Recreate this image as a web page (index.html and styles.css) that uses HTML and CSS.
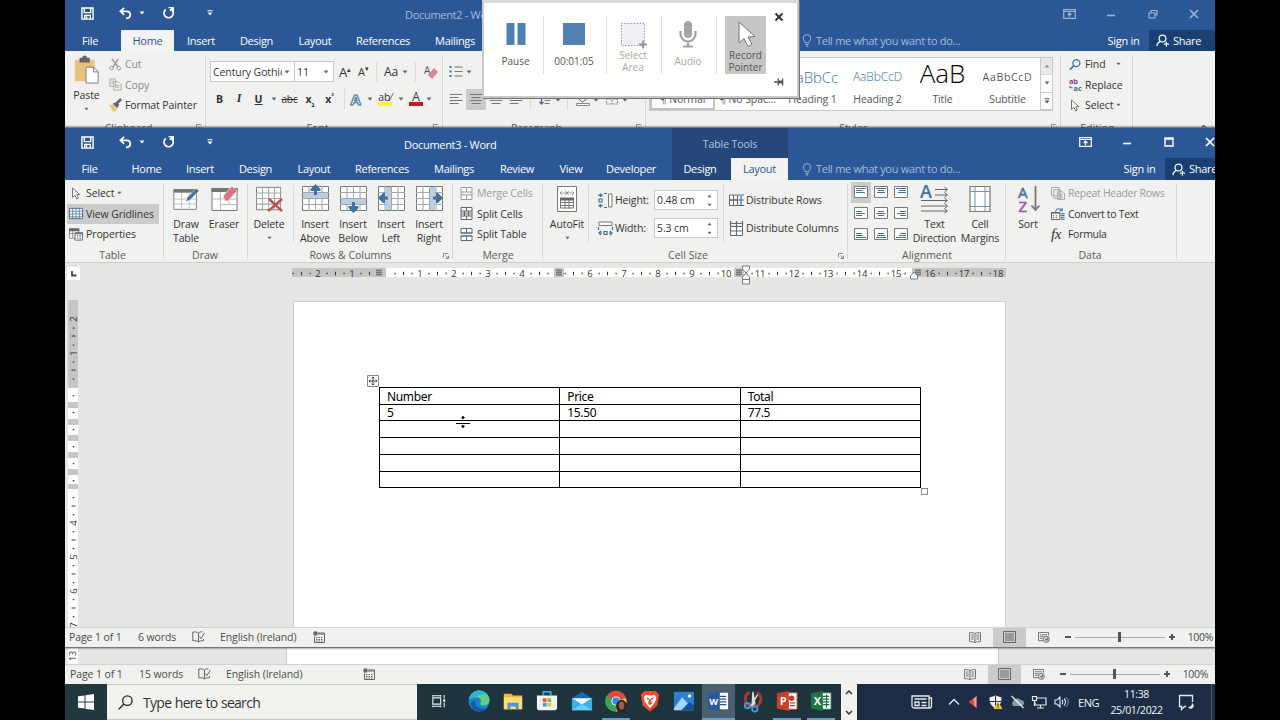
FILE: index.html
```html
<!DOCTYPE html>
<html lang="en">
  <head>
    <meta charset="UTF-8" />
    <title>Document3 - Word</title>
    <link rel="stylesheet" href="styles.css">
  </head>
  <body>
    <!-- shared icons -->
    <svg class="sprite" xmlns="http://www.w3.org/2000/svg">
      <symbol id="save" viewBox="0 0 14 14"><path d="M1 1h12v12H1zM3.500 1v5h7V1M4 13V9h6v4M6 10v3" fill="none" stroke="currentColor" stroke-width="1.500" /></symbol>
      <symbol id="undo" viewBox="0 0 14 14"><path d="M5.500 1L1.500 4.700l4 3.800M2 4.700h6.500c5 0 5 7.500-1 7.500" fill="none" stroke="currentColor" stroke-width="1.900" /></symbol>
      <symbol id="redo" viewBox="0 0 14 14"><path d="M4 2.700A5 5 0 1 0 10 2.500M7 0.500h5v5M11.500 1L8.500 4" fill="none" stroke="currentColor" stroke-width="1.800" /></symbol>
      <symbol id="caret" viewBox="0 0 6 4"><path d="M0.500 0.500h5L3 3.500z" fill="currentColor" /></symbol>
      <symbol id="morecaret" viewBox="0 0 6 6"><path d="M0.500 0.200h5v1h-5zM0.500 2.500h5L3 5.500z" fill="currentColor" /></symbol>
      <symbol id="ribbonopt" viewBox="0 0 13 10"><path d="M0.700 0.700h11.600v8.600H0.700zM1 2.500h11M6.500 8V4M4.500 6l2-2 2 2" fill="none" stroke="currentColor" stroke-width="1.200" /></symbol>
      <symbol id="min" viewBox="0 0 10 10"><path d="M1 6.500h8" stroke="currentColor" stroke-width="1.600" /></symbol>
      <symbol id="max" viewBox="0 0 10 10"><path d="M1 1h8v8H1zM1 2h8" fill="none" stroke="currentColor" stroke-width="1.400" /></symbol>
      <symbol id="restore" viewBox="0 0 10 10"><path d="M1 4h6v5H1zM3 4V1.500h6V6H7" fill="none" stroke="currentColor" stroke-width="1.200" /></symbol>
      <symbol id="close" viewBox="0 0 10 10"><path d="M1 1l8 8M9 1L1 9" stroke="currentColor" stroke-width="1.700" /></symbol>
      <symbol id="bulb" viewBox="0 0 10 14"><path d="M3 9.500C3 7.500 1 7 1 4.600a4 4 0 0 1 8 0C9 7 7 7.500 7 9.500zM3.200 11.500h3.600M4 13h2" fill="none" stroke="currentColor" /></symbol>
      <symbol id="person" viewBox="0 0 14 14"><circle cx="7" cy="4.800" r="3.700" fill="none" stroke="currentColor" stroke-width="1.300" /><path d="M5 8C2 9 1.200 11 1 13M8.500 11H14M11.200 8.300v5.500" fill="none" stroke="currentColor" stroke-width="1.300" /></symbol>
      <symbol id="pointer" viewBox="0 0 10 13"><path d="M1.500 1v9.500L4 8.300 5.600 12l1.700-.8L5.800 7.600h3z" fill="#fff" stroke="#666" stroke-width="0.900" /></symbol>
      <symbol id="launcher" viewBox="0 0 7 7"><path d="M0.500 5V0.500H6M3 3l3 3M6.500 3v3.500H3" fill="none" stroke="#666" stroke-width="0.900" /></symbol>
      <symbol id="grid" viewBox="0 0 27 27"><path d="M0.500 1.500h26v24h-26z" fill="#fff" stroke="#777" /><path d="M0 7.500h27M0 13.500h27M0 19.500h27M7 1v25M13.500 1v25M20 1v25" stroke="#a2a6aa" stroke-width="1.100" /></symbol>
      <symbol id="cells" viewBox="0 0 12 13"><path d="M0.500 0.500h11v4.500H0.500zM0.500 8h11v4.500H0.500zM6 0.500V5M6 8v4.500M0.500 5v3M11.500 5v3" fill="#fff" stroke="currentColor" /></symbol>
      <symbol id="book" viewBox="0 0 13 12"><path d="M6.500 2C5 0.700 3 0.800 0.800 1v8.800c2.200-.2 4.200-.2 5.700 1.200zM6.500 11c1.200-1.200 3-1.300 5-1.200V8M6.500 2c1-1 2-1.200 4-1.200M7.500 5.500l1.500 2L12.500 2" fill="none" stroke="#666" /></symbol>
      <symbol id="macro" viewBox="0 0 12 12"><path d="M5 2h6.500v9.500h-10V5.500M5 3h6" fill="none" stroke="#666" /><path d="M3 6.500h7M3 8.500h7M3 10h7" stroke="#666" stroke-dasharray="1.500 1" /><circle cx="2.500" cy="2.500" r="2.300" fill="#666" /></symbol>
      <symbol id="readview" viewBox="0 0 12 11"><path d="M6 1.500C4.500 0.500 2.500 0.500 0.500 0.700v9c2 0 4 0 5.500 1 1.500-1 3.500-1 5.500-1v-9C9.500 0.500 7.500 0.500 6 1.500v9M1.800 3h3M1.800 5h3M1.800 7h3M7.300 3h3M7.300 5h3M7.300 7h3" fill="none" stroke="#6a6a6a" stroke-width="0.900" /></symbol>
      <symbol id="printview" viewBox="0 0 13 12"><path d="M0.500 0.500h12v11H0.500zM2 3h9M2 5h9M2 7h9M2 9h9" fill="none" stroke="#666" /></symbol>
      <symbol id="webview" viewBox="0 0 13 12"><path d="M6 9.500H0.500v-9h11V4M2 3h8M2 5h4M2 7h3" fill="none" stroke="#6a6a6a" /><circle cx="9" cy="8" r="3.300" fill="#ddd" stroke="#666" /><path d="M7 7l2 1 1-2 1.500 1-2 3z" fill="#666" /></symbol>
      <symbol id="lines-left" viewBox="0 0 13 13"><path d="M0 1.500h13M0 4.500h9M0 7.500h13M0 10.500h9" stroke="#777" /></symbol>
      <symbol id="lines-center" viewBox="0 0 13 13"><path d="M0 1.500h13M2 4.500h9M0 7.500h13M2 10.500h9" stroke="#777" /></symbol>
      <symbol id="page-tl" viewBox="0 0 14 12"><path d="M0.500 0.500h13v11H0.500z" fill="#fff" stroke="#777" /></symbol>
      <symbol id="hash" viewBox="0 0 10 9"><path d="M0 0h10v9H0z" fill="#c4c4c2" /><path d="M3 1v7M5 1v7M7 1v7M2 2.500h6M2 4.500h6M2 6.500h6" stroke="#666" stroke-width="0.700" /></symbol>
    </svg>

    <div class="screen">
      <!-- window behind: Document2 -->
      <div class="window back">
        <div class="titlebar">
          <div class="qat">
            <svg><use href="#save" /></svg><svg><use href="#undo" /></svg><svg class="tiny"><use href="#caret" /></svg><svg><use href="#redo" /></svg><svg class="more"><use href="#morecaret" /></svg>
          </div>
          <div class="title">Document2 - Word</div>
          <div class="controls">
            <svg class="opt"><use href="#ribbonopt" /></svg><svg><use href="#min" /></svg><svg><use href="#restore" /></svg><svg><use href="#close" /></svg>
          </div>
        </div>
        <div class="tabs">
          <span>File</span><span class="active">Home</span><span>Insert</span><span>Design</span><span>Layout</span><span>References</span><span>Mailings</span><span>Review</span><span>View</span><span>Developer</span><span></span><span></span>
          <div class="tell"><svg><use href="#bulb" /></svg>Tell me what you want to do...</div>
          <div class="signin">Sign in</div>
          <div class="share"><svg><use href="#person" /></svg>Share</div>
        </div>
        <div class="ribbon">
          <div class="group clipboard">
            <div class="body">
              <div class="big">
                <svg viewBox="0 0 27 30"><path d="M1 4h21v23H1z" fill="#e8c37c" /><path d="M6 2h3a2.500 2.500 0 0 1 5 0h3v5H6z" fill="#666" /><path d="M13 12h8l5 5v12H13z" fill="#fff" stroke="#777" /><path d="M21 12v5h5" fill="none" stroke="#777" /></svg>
                <span>Paste</span><svg class="caret"><use href="#caret" /></svg>
              </div>
              <div class="rows">
                <div class="item off"><svg viewBox="0 0 14 14"><path d="M3 1l7 9M10 1L4 10" stroke="#999" stroke-width="1.500" /><circle cx="2.800" cy="11" r="2" fill="none" stroke="#999" /><circle cx="10.500" cy="11" r="2" fill="none" stroke="#999" /></svg>Cut</div>
                <div class="item off"><svg viewBox="0 0 14 14"><path d="M1 1h6v8H1zM5 4h5l3 3v6H5zM2.500 3.500h3M2.500 5.500h2M7 8h4M7 10h4" fill="#f1f1ef" stroke="#aaa" /></svg>Copy</div>
                <div class="item"><svg viewBox="0 0 14 14"><path d="M0 7l4-1 5 5-4 3z" fill="#e8c37c" /><path d="M4 5l4-2 3 3-2 4z" fill="#666" /><path d="M9 4l4-4" stroke="#666" stroke-width="3" /></svg>Format Painter</div>
              </div>
            </div>
            <div class="label">Clipboard<svg><use href="#launcher" /></svg></div>
          </div>
          <div class="group fontgroup">
            <div class="body">
              <div class="fontrow">
                <div class="combo face"><span>Century Gothic</span><svg class="tiny"><use href="#caret" /></svg></div>
                <div class="combo size">11<svg class="tiny"><use href="#caret" /></svg></div>
                <b class="grow">A<sup>▴</sup></b><b class="shrink">A<sup>▾</sup></b><i class="sep"></i>
                <span class="aa">Aa</span><svg class="tiny"><use href="#caret" /></svg><i class="sep"></i>
                <svg class="clear" viewBox="0 0 14 14"><text x="0" y="9" font-size="10" fill="#555">A</text><path d="M4 10l6-7 4 4-6 7z" fill="#e0829a" /></svg>
              </div>
              <div class="fontrow second">
                <b>B</b><b class="it">I</b><b class="un">U</b><svg class="tiny"><use href="#caret" /></svg><b class="st">abc</b><b>x<sub>₂</sub></b><b>x<sup>²</sup></b><i class="sep"></i>
                <b class="fx">A</b><svg class="tiny"><use href="#caret" /></svg><b class="hl">ab⁄</b><svg class="tiny"><use href="#caret" /></svg><b class="fc">A</b><svg class="tiny"><use href="#caret" /></svg>
              </div>
            </div>
            <div class="label">Font<svg><use href="#launcher" /></svg></div>
          </div>
          <div class="group para">
            <div class="body">
              <div class="prow"><svg class="ic" viewBox="0 0 13 13"><path d="M5 2h8M5 6.500h8M5 11h8" stroke="#777" /><path d="M0 1h2v2H0zM0 5.500h2v2H0zM0 10h2v2H0z" fill="#41719c" /></svg><svg class="tiny"><use href="#caret" /></svg></div>
              <div class="prow low">
                <svg class="ic"><use href="#lines-left" /></svg><svg class="ic on"><use href="#lines-center" /></svg><svg class="ic"><use href="#lines-center" /></svg><svg class="ic"><use href="#lines-left" /></svg><i class="sep"></i>
                <svg class="ic" viewBox="0 0 13 13"><path d="M3 1v10M1 9l2 2 2-2" stroke="#41719c" fill="none" stroke-width="1.400" /><path d="M6 4h7M6 7.500h6M6 10.500h5" stroke="#777" /></svg><svg class="tiny"><use href="#caret" /></svg><i class="sep wide"></i>
                <svg class="ic" viewBox="0 0 13 13"><path d="M2 6l4-4 4 4-4 3z" fill="none" stroke="#666" /><path d="M0 10.500h13v2H0z" fill="#fff" stroke="#888" /></svg><svg class="tiny"><use href="#caret" /></svg><svg class="ic border" viewBox="0 0 13 13"><path d="M1 1h11v10H1zM6.500 1v10M1 6h11" fill="none" stroke="#888" stroke-dasharray="2 1" /></svg><svg class="tiny"><use href="#caret" /></svg>
              </div>
            </div>
            <div class="label">Paragraph<svg><use href="#launcher" /></svg></div>
          </div>
          <div class="group styles">
            <div class="body">
              <div class="gallery">
                <div class="style chosen"><span>AaBbCcDc</span>¶ Normal</div>
                <div class="style"><span>AaBbCcDc</span>¶ No Spac...</div>
                <div class="style h1"><span>AaBbCc</span>Heading 1</div>
                <div class="style h2"><span>AaBbCcD</span>Heading 2</div>
                <div class="style ttl"><span>AaB</span>Title</div>
                <div class="style sub"><span>AaBbCcD</span>Subtitle</div>
                <div class="scroll"><i class="dim"><svg class="tiny up"><use href="#caret" /></svg></i><i><svg class="tiny"><use href="#caret" /></svg></i><i><svg class="more"><use href="#morecaret" /></svg></i></div>
              </div>
            </div>
            <div class="label">Styles<svg><use href="#launcher" /></svg></div>
          </div>
          <div class="group editing">
            <div class="body rows">
              <div class="item"><svg viewBox="0 0 13 13"><circle cx="8" cy="5" r="3.800" fill="none" stroke="#41719c" stroke-width="1.400" /><path d="M5 8l-4 4" stroke="#41719c" stroke-width="2" /></svg>Find<svg class="tiny far"><use href="#caret" /></svg></div>
              <div class="item"><svg viewBox="0 0 13 13"><text x="0" y="6" font-size="8" font-weight="bold" fill="#7a4a8a">ab</text><text x="5" y="13.500" font-size="8" font-weight="bold" fill="#41719c">ac</text><path d="M1 8v2h3" fill="none" stroke="#555" /></svg>Replace</div>
              <div class="item"><svg><use href="#pointer" /></svg>Select<svg class="tiny"><use href="#caret" /></svg></div>
            </div>
            <div class="label">Editing</div>
          </div>
          <div class="collapse">⌃</div>
        </div>
        <div class="backpage"><span class="vnum">13</span><div class="strip"></div></div>
        <div class="status">
          <span class="pages">Page 1 of 1</span><span class="words">15 words</span><svg class="proof"><use href="#book" /></svg><span class="lang">English (Ireland)</span><svg class="macro"><use href="#macro" /></svg>
          <div class="views">
            <svg><use href="#readview" /></svg><i><svg><use href="#printview" /></svg></i><svg><use href="#webview" /></svg>
            <b class="minus"></b><div class="slider"><b></b></div><b class="plus"></b><span>100%</span>
          </div>
        </div>
      </div>

      <!-- front window: Document3 -->
      <div class="window front">
        <div class="titlebar">
          <div class="qat">
            <svg><use href="#save" /></svg><svg><use href="#undo" /></svg><svg class="tiny"><use href="#caret" /></svg><svg><use href="#redo" /></svg><svg class="more"><use href="#morecaret" /></svg>
          </div>
          <div class="title">Document3 - Word</div>
          <div class="context">Table Tools</div>
          <div class="controls">
            <svg class="opt"><use href="#ribbonopt" /></svg><svg><use href="#min" /></svg><svg><use href="#max" /></svg><svg><use href="#close" /></svg>
          </div>
        </div>
        <div class="tabs">
          <span>File</span><span>Home</span><span>Insert</span><span>Design</span><span>Layout</span><span>References</span><span>Mailings</span><span>Review</span><span>View</span><span>Developer</span><span class="dark">Design</span><span class="active">Layout</span>
          <div class="tell"><svg><use href="#bulb" /></svg>Tell me what you want to do...</div>
          <div class="signin">Sign in</div>
          <div class="share"><svg><use href="#person" /></svg>Share</div>
        </div>
        <div class="ribbon">
          <div class="group table">
            <div class="body rows">
              <div class="item"><svg><use href="#pointer" /></svg>Select<svg class="tiny"><use href="#caret" /></svg></div>
              <div class="item pressed"><svg viewBox="0 0 15 12"><path d="M0.500 0.500h14v11H0.500z" fill="#fff" stroke="#41719c" /><path d="M0 3.500h15M0 6.500h15M0 9.500h15M4 0v12M7.500 0v12M11 0v12" stroke="#41719c" stroke-width="0.800" /></svg>View Gridlines</div>
              <div class="item"><svg viewBox="0 0 15 13"><path d="M0.500 0.500h10v10h-10zM0 5.500h9M4 1v9" fill="#fff" stroke="#888" /><path d="M0 0h11v3H0z" fill="#666" /><path d="M6.500 4.500h8v8h-8z" fill="#fff" stroke="#666" /><path d="M7 5.500h8M8.500 8h1.500M11 8h2M8.500 10.500h1.500M11 10.500h2" stroke="#41719c" stroke-width="1.300" /></svg>Properties</div>
            </div>
            <div class="label">Table</div>
          </div>
          <div class="group draw">
            <div class="body">
              <div class="big"><svg viewBox="0 0 30 28"><path d="M1 3.500h25v22H1z" fill="#fff" stroke="#777" /><path d="M1 14h25M1 19.500h25M9.500 7v18M18 7v18" stroke="#b5b9be" /><path d="M0.500 3h26v4h-26z" fill="#777" /><path d="M14 17l2-5L26 2l3 3-10 10z" fill="#41719c" stroke="#fff" stroke-width="0.600" /></svg><span>Draw<br>Table</span></div>
              <div class="big"><svg viewBox="0 0 27 28"><path d="M1 3.500h25v22H1z" fill="#fff" stroke="#777" /><path d="M1 14h25M9.500 7v18M9 19.500h17M18 7v13" stroke="#b5b9be" /><path d="M0.500 3h26v4h-26z" fill="#777" /><path d="M12 11l9-10 5 5-9 10h-3z" fill="#d9748c" stroke="#fff" stroke-width="0.600" /></svg><span>Eraser</span></div>
            </div>
            <div class="label">Draw</div>
          </div>
          <div class="group rc">
            <div class="body">
              <div class="big"><svg viewBox="0 0 29 28"><use href="#grid" x="0" y="0" width="27" height="27" /><path d="M14 14l14 13M28 14L13 27" stroke="#c0504d" stroke-width="2.600" /></svg><span>Delete</span><svg class="caret"><use href="#caret" /></svg></div>
              <i class="sep"></i>
              <div class="big"><svg viewBox="0 0 27 28"><use href="#grid" width="27" height="27" /><path d="M1 8h25v5H1z" fill="#b8cfe4" /><path d="M13.500 -1l5 5v2h-3.500v4h-3V6H8.500V4z" fill="#41719c" /></svg><span>Insert<br>Above</span></div>
              <div class="big"><svg viewBox="0 0 27 28"><use href="#grid" width="27" height="27" /><path d="M1 14h25v5H1z" fill="#b8cfe4" /><path d="M13.500 28l5-5v-2h-3.500v-4h-3v4H8.500v2z" fill="#41719c" /></svg><span>Insert<br>Below</span></div>
              <div class="big"><svg viewBox="0 0 27 28"><use href="#grid" width="27" height="27" /><path d="M8 2h5v23H8z" fill="#b8cfe4" /><path d="M0 13l5-5h2v3.500h3v3H7V18H5z" fill="#41719c" /></svg><span>Insert<br>Left</span></div>
              <div class="big"><svg viewBox="0 0 27 28"><use href="#grid" width="27" height="27" /><path d="M14 2h5v23h-5z" fill="#b8cfe4" /><path d="M27 13l-5-5h-2v3.500h-3v3h3V18h2z" fill="#41719c" /></svg><span>Insert<br>Right</span></div>
            </div>
            <div class="label">Rows &amp; Columns<svg><use href="#launcher" /></svg></div>
          </div>
          <div class="group merge">
            <div class="body rows">
              <div class="item off"><svg><use href="#cells" /></svg>Merge Cells</div>
              <div class="item"><svg viewBox="0 0 12 13"><path d="M0.500 0.500h11v12H0.500zM0.500 4h11M0.500 9h11M4 4v5M8 4v5M6 0v4M6 9v4" fill="#fff" stroke="#666" /><path d="M1 5h10v3H1z" fill="#41719c" opacity="0.500" /></svg>Split Cells</div>
              <div class="item"><svg viewBox="0 0 12 13"><path d="M0.500 0.500h11v4.500H0.500zM0.500 8h11v4.500H0.500zM6 0.500V5M6 8v4.500" fill="#fff" stroke="#666" /><path d="M0 5h12M0 8h12" stroke="#41719c" /></svg>Split Table</div>
            </div>
            <div class="label">Merge</div>
          </div>
          <div class="group cellsize">
            <div class="body">
              <div class="big"><svg viewBox="0 0 20 27"><path d="M0.500 1h19v25H0.500z" fill="#fff" stroke="#777" /><path d="M3 7.500h14M5 5.500l-2 2 2 2M15 5.500l2 2-2 2M8 5l4 5M12 5l-4 5" fill="none" stroke="#888" stroke-width="0.800" /><path d="M3.500 13.500h13v9h-13zM3.500 17h13M3.500 20h13M8 14v9M12 14v9" fill="none" stroke="#777" /><path d="M3 12h14v3H3z" fill="#666" /></svg><span>AutoFit</span><svg class="caret"><use href="#caret" /></svg></div>
              <i class="sep"></i>
              <div class="dims">
                <div class="dim-row"><svg viewBox="0 0 15 15"><path d="M2.500 1v3M2.500 11v3M0.500 3l2-2 2 2M0.500 12l2 2 2-2M1 6h3v3H1zM6 0.500h3M6 14.500h3" fill="none" stroke="#41719c" stroke-width="1.200" /><path d="M10.500 1h3.500v13h-3.500z" fill="#fff" stroke="#777" /></svg><span>Height:</span><div class="spin">0.48 cm<i><svg class="tiny up"><use href="#caret" /></svg><svg class="tiny"><use href="#caret" /></svg></i></div></div>
                <div class="dim-row"><svg viewBox="0 0 15 15"><path d="M1 1h13v3.500H1z" fill="#fff" stroke="#777" /><path d="M1 12h3M11 12h3M3 10l-2 2 2 2M12 10l2 2-2 2M6 10.500h3v3H6zM0.500 6v3M14.500 6v3" fill="none" stroke="#41719c" stroke-width="1.200" /></svg><span>Width:</span><div class="spin">5.3 cm<i><svg class="tiny up"><use href="#caret" /></svg><svg class="tiny"><use href="#caret" /></svg></i></div></div>
              </div>
              <i class="sep"></i>
              <div class="dims dist">
                <div class="dim-row"><svg viewBox="0 0 15 13"><path d="M0.500 1h8v5h-8zM0.500 6h8v5.500h-8zM4.500 1v10" fill="#fff" stroke="#666" /><path d="M9 1h6M9 6h6M9 11.500h6M12 2v9" stroke="#41719c" stroke-width="1.200" /></svg>Distribute Rows</div>
                <div class="dim-row"><svg viewBox="0 0 15 15"><path d="M1.500 5.500h12v9h-12zM1.500 10h12M7.500 5.500v9" fill="#fff" stroke="#666" /><path d="M1.500 0v5M7.500 0v5M13.500 0v5M1 2.500h13" stroke="#41719c" stroke-width="1.200" /></svg>Distribute Columns</div>
              </div>
            </div>
            <div class="label">Cell Size<svg><use href="#launcher" /></svg></div>
          </div>
          <div class="group align">
            <div class="body">
              <div class="nine">
                <i class="on"><svg viewBox="0 0 14 12"><use href="#page-tl" /><path d="M2 2.500h10M2 4.500h7M2 6.500h9" stroke="#41719c" /></svg></i>
                <i><svg viewBox="0 0 14 12"><use href="#page-tl" /><path d="M2 2.500h10M4 4.500h6M3 6.500h8" stroke="#41719c" /></svg></i>
                <i><svg viewBox="0 0 14 12"><use href="#page-tl" /><path d="M2 2.500h10M5 4.500h7M4 6.500h8" stroke="#41719c" /></svg></i>
                <i><svg viewBox="0 0 14 12"><use href="#page-tl" /><path d="M2 4.500h6M2 6.500h9M2 8.500h6" stroke="#41719c" /></svg></i>
                <i><svg viewBox="0 0 14 12"><use href="#page-tl" /><path d="M4 4.500h6M2.500 6.500h9M4 8.500h6" stroke="#41719c" /></svg></i>
                <i><svg viewBox="0 0 14 12"><use href="#page-tl" /><path d="M6 4.500h6M3 6.500h9M6 8.500h6" stroke="#41719c" /></svg></i>
                <i><svg viewBox="0 0 14 12"><use href="#page-tl" /><path d="M2 5.500h6M2 7.500h7M2 9.500h10" stroke="#41719c" /></svg></i>
                <i><svg viewBox="0 0 14 12"><use href="#page-tl" /><path d="M4 5.500h6M3 7.500h8M2 9.500h10" stroke="#41719c" /></svg></i>
                <i><svg viewBox="0 0 14 12"><use href="#page-tl" /><path d="M6 5.500h6M5 7.500h7M2 9.500h10" stroke="#41719c" /></svg></i>
              </div>
              <div class="big"><svg viewBox="0 0 29 28"><text x="0" y="13" font-size="18" font-weight="600" fill="#41719c">A</text><path d="M15 4.500h12M15 10h12M1 15.500h26M1 21h26M1 26h26" stroke="#666" stroke-width="1.200" /><path d="M24.500 2l3 2.500-3 2.500M24.500 7.500l3 2.500-3 2.500M24.500 13l3 2.500-3 2.500M24.500 18.500l3 2.500-3 2.500M24.500 23.500l3 2.500-3 2" fill="none" stroke="#666" /></svg><span>Text<br>Direction</span></div>
              <div class="big"><svg viewBox="0 0 22 28"><path d="M1 1.500h20v25H1z" fill="#fff" stroke="#777" stroke-width="1.200" /><path d="M6 2v24M16 2v24M1 6.500h20M1 21.500h20" stroke="#6f93b5" /></svg><span>Cell<br>Margins</span></div>
            </div>
            <div class="label">Alignment</div>
          </div>
          <div class="group data">
            <div class="body">
              <div class="big"><svg viewBox="0 0 23 28"><text x="1" y="12.500" font-size="15" fill="#41719c" stroke="#41719c" stroke-width="0.500">A</text><text x="1.500" y="27" font-size="15" fill="#9c4fa8" stroke="#9c4fa8" stroke-width="0.500">Z</text><path d="M18.500 1v24M14.500 20.500l4 4.500 4-4.500" fill="none" stroke="#777" stroke-width="1.800" /></svg><span>Sort</span></div>
              <div class="rows">
                <div class="item off"><svg viewBox="0 0 15 14"><path d="M0.500 0.500h8v9h-8zM3 3h7v9H3zM7 5h5l2.500 2v6.500H7zM8.500 8h4M8.500 10h4M8.500 12h4" fill="#f1f1ef" stroke="#a5a5a5" /></svg>Repeat Header Rows</div>
                <div class="item"><svg viewBox="0 0 15 14"><path d="M0.500 6h9v7.500h-9z" fill="#fff" stroke="#555" /><path d="M0 6.500h10M2 9.500h1.500M5 9.500h1.500M2 11.500h1.500M5 11.500h1.500" stroke="#555" /><path d="M5 5c0-3 3-4 6-2M12 1v3H9M10.500 7h4M10.500 9h4M10.500 11h4M10.500 13h4" fill="none" stroke="#41719c" stroke-width="1.200" /></svg>Convert to Text</div>
                <div class="item"><em>fx</em>Formula</div>
              </div>
            </div>
            <div class="label">Data</div>
          </div>
        </div>

        <div class="workspace">
          <div class="hrule">
            <div class="tabstop"><svg viewBox="0 0 13 13"><path d="M5 4v4.500h4.500" fill="none" stroke="#444" stroke-width="1.800" /></svg></div>
            <svg class="scale" viewBox="292 264 716 24">
              <path d="M292 268h94v9h-94zM912 268h94v9h-94z" fill="#c6c6c4" />
              <path d="M386 268h526v9H386z" fill="#fffffd" />
              <path d="M301 273.500h705" stroke="#333" stroke-width="3.500" stroke-dasharray="1 33" />
              <path d="M309.500 273.500h690" stroke="#333" stroke-width="1.500" stroke-dasharray="1.200 32.800" />
              <path d="M292.500 273.500h712" stroke="#333" stroke-width="1.500" stroke-dasharray="1.200 32.800" />
              <g class="nums">
                <text x="318" y="277">2</text><text x="352" y="277">1</text><text x="420" y="277">1</text><text x="454" y="277">2</text><text x="488" y="277">3</text><text x="522" y="277">4</text><text x="590" y="277">6</text><text x="624" y="277">7</text><text x="658" y="277">8</text><text x="692" y="277">9</text><text x="726" y="277">10</text><text x="760" y="277">11</text><text x="794" y="277">12</text><text x="828" y="277">13</text><text x="862" y="277">14</text><text x="896" y="277">15</text><text x="930" y="277">16</text><text x="964" y="277">17</text><text x="998" y="277">18</text>
              </g>
              <use href="#hash" x="373" y="268" width="12" height="9" /><use href="#hash" x="553" y="268" width="12" height="9" /><use href="#hash" x="733" y="268" width="12" height="9" /><use href="#hash" x="913" y="268" width="10" height="9" />
              <path d="M742.500 266h7v3l-3.500 4 3.500 4v7h-7v-7l3.500-4-3.500-4zM742.500 279.500h7" fill="#fff" stroke="#777" />
              <path d="M910.500 279v-3l3.500-4 3.500 4v3z" fill="#fff" stroke="#777" />
            </svg>
          </div>
          <div class="canvas">
            <svg class="vscale" viewBox="67 300 12 327">
              <path d="M68 300h10v327H68z" fill="#fffffd" />
              <path d="M68 300h10v88H68zM68 402h10v6H68zM68 419h10v6H68zM68 435h10v6H68zM68 452h10v6H68zM68 469h10v6H68zM68 484h10v5H68z" fill="#c6c6c4" />
              <path d="M73.500 327.500v60" stroke="#333" stroke-width="1.500" stroke-dasharray="1.200 15.800" />
              <path d="M73.500 335.500v45" stroke="#333" stroke-width="4" stroke-dasharray="1 33" />
              <path d="M73.500 395v95" stroke="#333" stroke-width="1.500" stroke-dasharray="1.200 15.800" />
              <path d="M73.500 497v130" stroke="#333" stroke-width="1.500" stroke-dasharray="1.200 15.800" />
              <path d="M73.500 505.500v115" stroke="#333" stroke-width="4" stroke-dasharray="1 33" />
              <g class="nums">
                <text transform="translate(77 319) rotate(-90)">2</text><text transform="translate(77 353) rotate(-90)">1</text><text transform="translate(77 523) rotate(-90)">4</text><text transform="translate(77 557) rotate(-90)">5</text><text transform="translate(77 591) rotate(-90)">6</text><text transform="translate(77 625) rotate(-90)">7</text>
              </g>
            </svg>
            <div class="page">
              <table>
                <tr><td>Number</td><td>Price</td><td>Total</td></tr>
                <tr class="short"><td>5</td><td>15.50</td><td>77.5</td></tr>
                <tr><td></td><td></td><td></td></tr>
                <tr><td></td><td></td><td></td></tr>
                <tr><td></td><td></td><td></td></tr>
                <tr class="short"><td></td><td></td><td></td></tr>
              </table>
              <svg class="move" viewBox="0 0 12 12"><path d="M0.500 0.500h11v11H0.500z" fill="#fff" stroke="#888" /><path d="M6 2v8M2 6h8M4.700 3.300L6 2l1.300 1.300M4.700 8.700L6 10l1.300-1.300M3.300 4.700L2 6l1.300 1.300M8.700 4.700L10 6 8.700 7.300" fill="none" stroke="#333" stroke-width="0.900" /></svg>
              <i class="handle"></i>
              <svg class="resize" viewBox="0 0 14 14"><path d="M0 5h14v4H0z" fill="#fff" /><path d="M0 5.500h14M0 8.500h14M7 1v3M7 10v3" stroke="#000" /><path d="M5 3l2-2 2 2-2 1zM5 11l2 2 2-2-2-1z" /></svg>
            </div>
          </div>
        </div>
        <div class="status">
          <span class="pages">Page 1 of 1</span><span class="words">6 words</span><svg class="proof"><use href="#book" /></svg><span class="lang">English (Ireland)</span><svg class="macro"><use href="#macro" /></svg>
          <div class="views">
            <svg><use href="#readview" /></svg><i><svg><use href="#printview" /></svg></i><svg><use href="#webview" /></svg>
            <b class="minus"></b><div class="slider"><b></b></div><b class="plus"></b><span>100%</span>
          </div>
        </div>
      </div>

      <!-- screen recording bar -->
      <div class="recorder">
        <div class="rec"><svg viewBox="0 0 26 26"><path d="M3.500 2h8v22h-8zM14.500 2h8v22h-8z" fill="#4f81b5" /></svg>Pause</div>
        <div class="rec"><svg viewBox="0 0 26 26"><path d="M2 2h22v22H2z" fill="#4f81b5" /></svg>00:01:05</div>
        <div class="rec off two"><svg viewBox="0 0 26 26"><path d="M1.500 2.500h23v22h-23z" fill="#f1eef5" stroke="#9a9a9a" stroke-dasharray="1.500 1.500" /><path d="M19 23.500h8M23 19.500v8" stroke="#999" stroke-width="2" /></svg>Select<br>Area</div>
        <div class="rec off"><svg viewBox="0 0 26 26"><rect x="9" y="0" width="8" height="17" rx="4" fill="#a3a3a3" /><path d="M5.500 10v3a7.500 7.500 0 0 0 15 0v-3M13 20v5M8 25.500h10" fill="none" stroke="#a3a3a3" stroke-width="2.200" /></svg>Audio</div>
        <div class="rec two pressed"><svg viewBox="0 0 26 26"><path d="M6 1v21l5-4.500 4 8 4-2-4-7.500 7-.5z" fill="#fff" stroke="#777" /></svg>Record<br>Pointer</div>
        <div class="side"><svg viewBox="0 0 10 10"><path d="M1.500 1.500l7 7M8.500 1.500l-7 7" stroke="#333" stroke-width="2" /></svg><svg viewBox="0 0 10 10"><path d="M0 5h4" stroke="#555" stroke-width="1.500" /><path d="M3.500 1.500h1.300v2H8v-2h1.300v7H8v-2H4.800v2H3.500z" fill="#555" /></svg></div>
      </div>

      <div class="taskbar">
        <div class="start"><svg viewBox="0 0 16 16"><path d="M0 2.300l6.500-.9v6.200H0zM7.500 1.200L16 0v7.600H7.500zM0 8.500h6.500v6.100L0 13.700zM7.500 8.500H16V16l-8.500-1.200z" fill="#fff" /></svg></div>
        <div class="search"><svg viewBox="0 0 16 16"><circle cx="10" cy="6" r="5" fill="none" stroke="#222" stroke-width="1.400" /><path d="M6.300 9.700L0.700 15.300" stroke="#222" stroke-width="1.500" /></svg>Type here to search</div>
        <div class="apps">
          <i class="taskview"><svg viewBox="0 0 16 16"><path d="M1.500 4.500h9v7h-9zM1.500 3V1M10.500 3V1M1.500 13v2M10.500 13v2M1.500 2h9M1.500 14h9M14.500 1v4M14.500 10v5" fill="none" stroke="#e8ecee" stroke-width="1.300" /><path d="M13.300 6h2.500v3h-2.500z" fill="#e8ecee" /></svg></i>
          <i><svg viewBox="0 0 24 24"><circle cx="12" cy="12" r="11.500" fill="#1d7fd0" /><path d="M1 10C3 3 8 .5 12 .5c7 0 11.500 5.500 11.500 10.500 0 4-3 6-6.500 6-4 0-4-2-3-4 1-3-2-6-6-5-3 0-5 1-7 2z" fill="#5fd08a" /><path d="M1 10C3 3 8 .5 12 .5c4 0 7 2 8 4.500-8-2-10 3-19 5z" fill="#2db3dc" /><path d="M8 12c-1 6 4 10 13 7.500-5 5.500-16 4.500-18-3.500 0-3 2-5 5-4z" fill="#1b57a5" /></svg></i>
          <i><svg viewBox="0 0 24 24"><path d="M2 4h8l2 2h10v15H2z" fill="#f0b93a" /><path d="M2 8h20v13H2z" fill="#fcdc7a" /><path d="M6 21v-7h12v7h-3v-3H9v3z" fill="#4698d8" /></svg></i>
          <i><svg viewBox="0 0 24 24"><path d="M8 6V2h8v4" fill="none" stroke="#3ba5dc" stroke-width="2" /><path d="M1 6h22v14a2 2 0 0 1-2 2H3a2 2 0 0 1-2-2z" fill="#f4f4f4" /><path d="M7.500 9h4v4h-4z" fill="#e8502d" /><path d="M12.500 9h4v4h-4z" fill="#7cb82f" /><path d="M7.500 14h4v4h-4z" fill="#2a9fe0" /><path d="M12.500 14h4v4h-4z" fill="#f6b81a" /></svg></i>
          <i><svg viewBox="0 0 24 24"><path d="M1 9l11-7 11 7v12H1z" fill="#1468b0" /><path d="M1 9h22L12 16z" fill="#f5fafd" /><path d="M1 9l11 7 11-7v13H1z" fill="#35b1ee" /><path d="M1 22l11-7 11 7z" fill="#69cdf6" /></svg></i>
          <i class="open"><svg viewBox="0 0 24 24"><circle cx="12" cy="12" r="11.500" fill="#dd4b3a" /><path d="M12 12L2 6A11.500 11.500 0 0 0 12 23.500z" fill="#3aa757" /><path d="M12 12l11-3A11.500 11.500 0 0 1 12 23.500z" fill="#f5c52c" /><circle cx="12" cy="12" r="5" fill="#fff" /><circle cx="12" cy="12" r="4" fill="#4285f4" /><ellipse cx="18" cy="18" rx="6" ry="7.500" fill="#30231f" /><ellipse cx="18" cy="17" rx="3" ry="4.500" fill="#94624b" /></svg></i>
          <i><svg viewBox="0 0 24 24"><path d="M6 1h12l4 4-2 12-8 6.500L4 17 2 5z" fill="#f04a28" /><path d="M7 5l5 1 5-1 2 4-2 5-5 6-5-6-2-5z" fill="#fff" /><path d="M7.500 8l3.500 1-1 2.500zM16.500 8L13 9l1 2.500zM11 10h2l1 5-2 1.500-2-1.500z" fill="#f04a28" /></svg></i>
          <i><svg viewBox="0 0 24 24"><path d="M1 2h22v20H1z" fill="#2b7fd3" /><path d="M1 20L10 8l13 14H1z" fill="#9fd7f7" /><path d="M9 22l9-9 5 4v5z" fill="#164f9c" /><circle cx="18" cy="6.500" r="2" fill="#fff" /></svg></i>
          <i class="open current"><svg viewBox="0 0 24 24"><path d="M12 3h11v18H12z" fill="#fff" /><path d="M14 7h7M14 10h7M14 13h7M14 16h7" stroke="#2b579a" stroke-width="1.400" /><path d="M1 3.500L14 1v22L1 20.500z" fill="#2b579a" /><text x="2.500" y="16" font-size="10" font-weight="bold" fill="#fff">W</text></svg></i>
          <i><svg viewBox="0 0 24 24"><circle cx="12" cy="10" r="8.500" fill="none" stroke="#b5362f" stroke-width="3" stroke-dasharray="36 8" /><path d="M12 2l2 13-3 2zM17 5l-7 12" stroke="#ddd" stroke-width="1.500" fill="#ddd" /><circle cx="6" cy="17" r="3" fill="none" stroke="#3f9be0" stroke-width="2" /><circle cx="14" cy="20.500" r="3" fill="none" stroke="#3f9be0" stroke-width="2" /></svg></i>
          <i class="open"><svg viewBox="0 0 24 24"><path d="M12 3h11v18H12z" fill="#fff" stroke="#c8402c" /><path d="M15 14h6M15 17h6" stroke="#c8402c" stroke-width="1.500" /><circle cx="17" cy="9" r="3" fill="#c8402c" /><path d="M1 3.500L14 1v22L1 20.500z" fill="#c8402c" /><text x="4" y="16.500" font-size="12" font-weight="bold" fill="#fff">P</text></svg></i>
          <i class="open"><svg viewBox="0 0 24 24"><path d="M12 3h11v18H12z" fill="#fff" stroke="#1f7244" /><path d="M14 7h7M14 10h7M14 13h7M14 16h7M18 5v14" stroke="#1f7244" stroke-width="1.300" /><path d="M1 3.500L14 1v22L1 20.500z" fill="#1f7244" /><text x="4" y="16.500" font-size="12" font-weight="bold" fill="#fff">X</text></svg></i>
        </div>
        <div class="updown"><svg viewBox="0 0 8 5"><path d="M1 4l3-3 3 3" fill="none" stroke="#333" stroke-width="1.500" /></svg><svg viewBox="0 0 8 5"><path d="M1 1l3 3 3-3" fill="none" stroke="#333" stroke-width="1.500" /></svg></div>
        <div class="tray">
          <svg class="news" viewBox="0 0 22 14"><path d="M1 1h17v12H3a2 2 0 0 1-2-2zM18 3h2.500v8a2 2 0 0 1-2.500 2M3.500 4h12M4 7h4v3.500H4zM10.500 7.500h5M10.500 10.500h5" fill="none" stroke="#e6eaf0" stroke-width="1.300" /></svg>
          <svg class="chev" viewBox="0 0 12 12"><path d="M1 8.500l5-5 5 5" fill="none" stroke="#e6eaf0" stroke-width="1.300" /></svg>
          <svg viewBox="0 0 14 14"><path d="M2 7l8-6v12z" fill="#d8463c" /><path d="M7 4l3-3v12L8 11z" fill="#f39a8c" /></svg>
          <svg viewBox="0 0 14 14"><path d="M7 0.500l6 2c0 5-1 8-6 11C2 10.500 1 7.500 1 2.500z" fill="#f4f4f4" /><path d="M7 1v12M1 6.500h12" stroke="#1c2c44" /><path d="M9.500 6l4.500 8H5z" fill="#f6c22d" /><path d="M9.500 8.500v3M9.500 12.200v1" stroke="#333" /></svg>
          <svg viewBox="0 0 14 14"><path d="M3 11a3 3 0 0 1 0-5 4 4 0 0 1 7-1 3 3 0 0 1 1 6z" fill="#8d98a6" /><path d="M1 1l12 12" stroke="#e6eaf0" stroke-width="1.300" /></svg>
          <svg viewBox="0 0 15 14"><path d="M5 3h9v7H3V7M5 13h7M8.500 10v3M0.500 1.500h4v4h-4zM2.500 6v5" fill="none" stroke="#e6eaf0" stroke-width="1.200" /></svg>
          <svg viewBox="0 0 15 14"><path d="M1 5h2l3-3v10L3 9H1zM8 5c1 1 1 3 0 4M10 3.500c2 2 2 5 0 7" fill="none" stroke="#e6eaf0" stroke-width="1.100" /><path d="M12 2c3 3 3 7 0 10" fill="none" stroke="#8d98a6" /></svg>
          <span class="eng">ENG</span>
          <div class="clock">11:38<br>25/01/2022</div>
          <svg class="note" viewBox="0 0 16 16"><path d="M8 12.500H6.500l-3 3v-3h-2v-11h13V8" fill="none" stroke="#e6eaf0" stroke-width="1.300" /><path d="M14 9a3 3 0 1 1-4 4 4 4 0 0 0 4-4z" fill="#e6eaf0" /></svg>
          <i class="peek"></i>
        </div>
      </div>
    </div>
  </body>
</html>
```

FILE: styles.css
```css
body {
  margin: 0;
  background: #000;
  font-family: "Open Sans", "Noto Sans", sans-serif;
  font-size: 10.5px;
  letter-spacing: -0.1px;
  color: #333;
}
i, em, b {
  font-style: normal;
}
svg {
  display: block;
  flex: none;
  overflow: visible;
}
.sprite {
  position: absolute;
  width: 0;
  height: 0;
}
.screen {
  position: relative;
  width: 1150px;
  height: 720px;
  margin-left: 65px;
  overflow: hidden;
}
.window {
  position: absolute;
  left: 0;
  display: flex;
  flex-direction: column;
  background: #e6e6e4;
}
.back {
  top: 0;
  width: 1150px;
  height: 684px;
}
.front {
  top: 128px;
  width: 1166px;
  height: 519px;
  box-shadow: 0 0 2px 1px #3c4654;
}

/* title bar */
.titlebar {
  display: flex;
  height: 30px;
  background: #2c5796;
  color: #fff;
}
.qat {
  display: flex;
  align-items: center;
  width: 323px;
  height: 28px;
  padding-left: 16px;
}
.qat svg {
  width: 13px;
  height: 13px;
  margin-right: 25px;
}
.qat svg:nth-child(2) {
  margin-right: 7px;
}
.qat .tiny {
  width: 6px;
  height: 4px;
  margin-right: 17px;
}
.qat .more {
  width: 6px;
  height: 6px;
  margin-left: 7px;
}
.back .qat {
  width: 323px;
  height: 26px;
}
.title {
  width: 268px;
  line-height: 33px;
  font-size: 11px;
  letter-spacing: -0.3px;
}
.back .title {
  line-height: 29px;
  color: #a5bbdc;
  padding-left: 1px;
}
.context {
  width: 116px;
  line-height: 33px;
  text-align: center;
  background: #24467a;
  color: #b3c7e4;
}
.controls {
  display: grid;
  grid-template-columns: repeat(4, 41.5px);
  align-items: center;
  justify-items: center;
  height: 28px;
  margin-left: auto;
}
.controls svg {
  width: 10px;
  height: 10px;
}
.controls .opt {
  width: 13px;
}
.back .controls {
  color: #9db3d6;
}

/* tabs */
.tabs {
  display: grid;
  grid-template-columns: 49px 65px 42px 69px 48px 88px 56px 70px 38px 82px 59px 57px 1fr 51px 66px;
  height: 22px;
  line-height: 22px;
  background: #2c5796;
  color: #fff;
  text-align: center;
  font-size: 11px;
  letter-spacing: -0.3px;
}
.back .tabs {
  grid-template-columns: 50px 65px 42px 69px 48px 88px 56px 70px 38px 82px 59px 57px 1fr 51px 66px;
  height: 21px;
  line-height: 21px;
}
.tabs .active {
  background: #f3f3f1;
  color: #2c5796;
}
.back .active {
  margin: 0 6px;
}
.tabs .dark {
  background: #24467a;
  padding-right: 3px;
}
.tell {
  display: flex;
  align-items: center;
  color: #a5bbdc;
  padding-left: 14px;
  gap: 4px;
  letter-spacing: -0.3px;
}
.back .tell {
  padding-left: 13px;
}
.tell svg {
  width: 10px;
  height: 13px;
}
.share {
  display: flex;
  align-items: center;
  gap: 4px;
  padding-left: 7px;
  background: #1a4073;
}
.share svg {
  width: 13px;
  height: 13px;
}

/* ribbon */
.ribbon {
  display: flex;
  height: 82px;
  background: #f1f1ef;
  border-bottom: 1px solid #cfcfcd;
}
.group {
  display: flex;
  flex-direction: column;
  box-sizing: border-box;
  position: relative;
}
.group::after {
  content: "";
  position: absolute;
  right: 0;
  top: 4px;
  bottom: 3px;
  border-right: 1px solid #d6d6d4;
}
.body {
  flex: 1;
  display: flex;
}
.label {
  display: flex;
  justify-content: center;
  line-height: 15px;
  height: 14px;
  color: #5a5a5a;
  position: relative;
  letter-spacing: 0;
}
.label svg {
  position: absolute;
  right: 4px;
  top: 5px;
  width: 6px;
  height: 6px;
}
.rows {
  display: flex;
  flex-direction: column;
  padding-top: 3px;
}
.item {
  display: flex;
  align-items: center;
  height: 20.6px;
  white-space: nowrap;
}
.item svg {
  width: 13px;
  height: 13px;
  margin-right: 4px;
}
.off {
  color: #9b9b9b;
}
.item .tiny {
  width: 5px;
  height: 4px;
  margin: 0 0 0 3px;
}
.item .far {
  margin-left: 10px;
}
.tiny {
  width: 6px;
  height: 4px;
  color: #666;
}
.titlebar .tiny {
  color: inherit;
}
.up {
  transform: rotate(180deg);
}
.big {
  display: flex;
  flex-direction: column;
  align-items: center;
  width: 38px;
  padding-top: 5px;
  line-height: 14px;
  text-align: center;
}
.big svg {
  height: 28px;
  width: 27px;
  margin-bottom: 4px;
}
.big .caret {
  width: 5px;
  height: 4px;
  margin: 5px 0 0;
  color: #666;
}
.sep {
  width: 1px;
  background: #dadad8;
  margin: 5px 0 6px;
}
.table { width: 99px; }
.table .item {
  margin-left: 2px;
  padding-left: 2px;
}
.table .item svg:first-child {
  width: 14px;
  margin-right: 3px;
}
.table .pressed {
  background: #cbcbc9;
  width: 90px;
}
.table .label { padding-right: 4px; }
.draw { width: 84px; }
.draw .body { padding-left: 3px; }
.draw .label { padding-right: 2px; }
.rc { width: 205px; }
.rc .body { padding-left: 2px; }
.rc .sep { margin-left: 5px; margin-right: 2px; }
.merge { width: 90px; }
.merge .rows { padding-left: 7px; }
.cellsize { width: 305px; }
.cellsize .body { padding-left: 3px; }
.cellsize .big { width: 42px; }
.cellsize .big svg:first-child { width: 20px; }
.cellsize .label { padding-right: 15px; }
.cellsize .label svg { right: 4px; }
.dims {
  padding: 6px 0 0 9px;
}
.dim-row {
  display: flex;
  align-items: center;
  height: 28px;
  width: 125px;
}
.dim-row > svg {
  width: 15px;
  height: 15px;
  margin-right: 2px;
}
.dim-row > span {
  width: 39px;
  letter-spacing: -0.15px;
}
.spin {
  box-sizing: border-box;
  display: flex;
  align-items: center;
  justify-content: space-between;
  width: 64px;
  height: 20px;
  padding: 0 5px 0 2px;
  background: #fff;
  border: 1px solid #c8c8c6;
}
.spin i {
  display: flex;
  flex-direction: column;
  gap: 5px;
}
.spin .tiny {
  width: 5px;
}
.dist {
  padding-left: 5px;
}
.dist .dim-row {
  width: 115px;
  white-space: nowrap;
}
.align { width: 158px; }
.nine {
  display: grid;
  grid-template-columns: repeat(3, 20px);
  grid-auto-rows: 20.7px;
  padding: 2px 0 0 3px;
}
.nine i {
  display: flex;
  align-items: center;
  justify-content: center;
}
.nine svg {
  width: 14px;
  height: 12px;
}
.nine .on {
  background: #cbcbc9;
}
.align .big { width: 47px; letter-spacing: -0.15px; }
.align .big svg { width: 29px; }
.align .big:last-child { width: 44px; }
.align .big:last-child svg { width: 22px; }
.data { width: 171px; }
.data .big { width: 44px; padding-right: 1px; }
.data .big svg { width: 23px; }
.data .item { letter-spacing: -0.3px; }
.data .item svg { width: 14px; margin-right: 3px; }
.data em {
  width: 17px;
  font: italic 15px "Liberation Serif", serif;
}
.data .label { padding-right: 3px; }

/* home ribbon */
.back .ribbon {
  height: 84px;
  border: 0;
}
.back .label {
  height: 16px;
  line-height: 18px;
}
.clipboard { width: 141px; }
.clipboard .big {
  width: 43px;
}
.clipboard .big svg:first-child {
  margin-bottom: 4px;
}
.clipboard .item svg { margin-right: 3px; margin-left: 1px; }
.clipboard .off { color: #8a8a8a; }
.clipboard .label { padding-right: 14px; }
.fontgroup { width: 237px; }
.fontgroup .body {
  display: block;
  padding: 10px 0 0 4px;
}
.fontgroup .label { padding-right: 14px; }
.fontgroup .label svg, .clipboard .label svg { right: 4px; }
.fontrow {
  display: flex;
  align-items: center;
  height: 21px;
}
.combo {
  box-sizing: border-box;
  display: flex;
  align-items: center;
  justify-content: space-between;
  height: 21px;
  padding: 0 4px 0 2px;
  background: #fff;
  border: 1px solid #c8c8c6;
}
.face { width: 85px; }
.face span {
  width: 69px;
  overflow: hidden;
  white-space: nowrap;
}
.size { width: 39px; border-left: 0; }
.grow { font-size: 13px; font-weight: 400; margin-left: 5px; width: 19px; }
.shrink { font-size: 11px; font-weight: 400; width: 18px; }
.fontrow sup { font-size: 7px; line-height: 0; }
.fontrow sub { font-size: 8px; line-height: 0; }
.fontrow .sep { height: 20px; margin: 0; }
.aa { font-size: 12px; margin-left: 7px; width: 18px; }
.fontrow .clear { width: 14px; height: 14px; margin-left: 8px; }
.aa + .tiny { margin-right: 7px; }
.second {
  display: grid;
  grid-template-columns: 19px 20px 19px 11px 21px 20px 19px 10px 13px 15px 16px 15px 16px 10px;
  justify-items: center;
  margin-top: 6px;
  text-align: center;
}
.second .it { font-style: italic; font-family: "Liberation Serif", serif; font-size: 12px; }
.second .un { text-decoration: underline; }
.second .st { text-decoration: line-through; font-size: 10px; font-weight: 400; }
.second .fx { color: #f1f1ef; font-size: 15px; -webkit-text-stroke: 1px #41719c; }
.second .hl { border-bottom: 4px solid #fdf13c; line-height: 10px; font-weight: 400; }
.second .fc { border-bottom: 4px solid #c4161c; line-height: 10px; width: 14px; font-weight: 400; font-size: 12px; }
.para { width: 203px; }
.para .body {
  display: block;
  padding: 10px 0 0 3px;
}
.para .label { padding-right: 16px; }
.prow {
  display: flex;
  align-items: center;
  height: 21px;
}
.low { margin-top: 7px; }
.prow .ic {
  width: 13px;
  height: 13px;
  padding: 4px 3.500px;
}
.prow .on { background: #cbcbc9; }
.prow .sep { height: 20px; margin: 0 4px; }
.prow .wide { margin: 0 5px 0 6px; }
.prow .border { margin-left: 3px; }
.styles { width: 415px; }
.styles .body { padding: 6px 0 0 3px; }
.gallery {
  box-sizing: border-box;
  display: grid;
  grid-template-columns: repeat(6, 65px) 1fr;
  width: 404px;
  height: 54px;
  background: #fff;
  border: 1px solid #c8c8c6;
  overflow: hidden;
}
.style {
  display: flex;
  flex-direction: column;
  align-items: center;
  justify-content: flex-end;
  padding-bottom: 3px;
  line-height: 15px;
  color: #555;
  white-space: nowrap;
}
.chosen { border: 2px solid #c3c3c1; padding-bottom: 1px; }
.style span {
  height: 28px;
  line-height: 26px;
  max-width: 54px;
  overflow: hidden;
}
.h1 span { font-size: 15px; font-weight: 300; color: #41719c; }
.h2 span { font-size: 12px; font-weight: 300; color: #41719c; }
.ttl span { font-size: 26px; font-weight: 300; color: #000; line-height: 18px; max-width: 52px; }
.sub span { letter-spacing: 0.7px; }
.scroll {
  display: grid;
  grid-template-rows: repeat(3, 1fr);
  border-left: 1px solid #c8c8c6;
}
.scroll i {
  display: flex;
  align-items: center;
  justify-content: center;
  border-bottom: 1px solid #c8c8c6;
}
.scroll .more { width: 6px; height: 6px; color: #555; }
.scroll .dim { background: #e1e1df; opacity: 0.7; }
.editing { width: 72px; }
.editing .rows { padding-left: 8px; }
.editing .item svg:first-child { width: 12px; }
.collapse {
  margin-left: auto;
  padding: 71px 7px 0 0;
}
.backpage {
  flex: 1;
  display: flex;
  align-items: flex-end;
}
.vnum {
  width: 10px;
  height: 16px;
  margin-left: 3px;
  background: #fffffd;
  writing-mode: vertical-rl;
  transform: rotate(180deg);
  font-size: 9px;
  line-height: 10px;
  text-align: center;
}
.strip {
  width: 711px;
  height: 16px;
  margin-left: 209px;
  background: #fffffd;
  box-shadow: 0 0 0 1px #c9c9c7;
}

/* document area */
.workspace {
  flex: 1;
  display: flex;
  flex-direction: column;
  min-height: 0;
  overflow: hidden;
}
.hrule {
  display: flex;
  height: 37px;
}
.tabstop {
  width: 13px;
  height: 13px;
  margin: 4px 0 0 2px;
  background: #fffffd;
}
.scale {
  width: 716px;
  height: 24px;
  margin: 1px 0 0 212px;
}
.nums {
  font-size: 9.5px;
  fill: #333;
  text-anchor: middle;
  stroke: none;
}
.canvas {
  flex: 1;
  display: flex;
  min-height: 0;
}
.vscale {
  width: 12px;
  height: 327px;
  margin-left: 2px;
}
.page {
  position: relative;
  width: 711px;
  margin: 1px 0 0 214px;
  background: #fffffd;
  border: solid #cfcfcd;
  border-width: 1px 1px 0 1px;
}
.page table {
  border-collapse: collapse;
  table-layout: fixed;
  width: 542px;
  margin: 85px 0 0 85px;
  font-family: "Noto Sans", sans-serif;
  font-size: 12px;
  line-height: 14px;
  letter-spacing: -0.35px;
  color: #000;
}
.page tr { height: 17px; }
.page .short { height: 16px; }
.page td {
  border: 1px solid #000;
  padding: 1px 0 0 7px;
  height: inherit;
  box-sizing: border-box;
}
.move {
  position: absolute;
  left: 73px;
  top: 73px;
  width: 12px;
  height: 12px;
}
.handle {
  position: absolute;
  left: 627px;
  top: 186px;
  width: 5px;
  height: 5px;
  border: 1px solid #888;
  background: #fff;
}
.resize {
  position: absolute;
  left: 162px;
  top: 113px;
  width: 14px;
  height: 14px;
}

/* status bar */
.status {
  display: flex;
  align-items: center;
  box-sizing: border-box;
  width: 1150px;
  height: 20px;
  padding: 0 2px 1px 4px;
  background: #f1f1ef;
  border-top: 1px solid #d2d2d0;
  color: #4a4a4a;
}
.back .status {
  padding: 0 7px 1px 5px;
}
.pages { width: 69px; }
.words { width: 54px; }
.back .words { width: 59px; }
.proof, .macro {
  width: 13px;
  height: 12px;
}
.lang {
  width: 94px;
  padding-left: 15px;
}
.macro {
  width: 12px;
  margin-left: -1px;
}
.back .macro {
  margin-left: 43px;
}
.views {
  display: flex;
  align-items: center;
  height: 19px;
  margin-left: auto;
}
.views svg {
  width: 12px;
  height: 11px;
}
.views > i {
  display: flex;
  align-items: center;
  justify-content: center;
  width: 33px;
  height: 19px;
  margin: 0 12px;
  background: #cbcbc9;
}
.views > i svg { width: 13px; height: 12px; }
.minus, .plus {
  width: 6px;
  height: 2px;
  margin-left: 15px;
  background: #555;
}
.plus {
  margin: 0 13px 0 0;
  position: relative;
}
.plus::after {
  content: "";
  position: absolute;
  left: 2px;
  top: -2px;
  width: 2px;
  height: 6px;
  background: #555;
}
.slider {
  display: flex;
  align-items: center;
  justify-content: center;
  width: 90px;
  height: 1px;
  margin: 0 4px;
  background: #aaa;
}
.slider b {
  width: 3px;
  height: 10px;
  background: #555;
}
.views > span {
  letter-spacing: -0.35px;
}

/* recorder */
.recorder {
  position: absolute;
  left: 417px;
  top: 0;
  box-sizing: border-box;
  display: flex;
  width: 317px;
  height: 98px;
  padding: 13px 0 0 2px;
  background: #fffffd;
  border: 2px solid #c9c9c7;
  border-top: 3px solid #d8d8d6;
  box-shadow: 1px 1px 0 0 #707070;
}
.rec {
  box-sizing: border-box;
  width: 55px;
  height: 58px;
  padding-top: 5px;
  border-right: 1px solid #dcdcda;
  text-align: center;
  line-height: 12px;
  font-size: 10px;
  letter-spacing: 0;
  color: #555;
}
.rec:first-child { width: 58px; padding-left: 2px; }
.rec:nth-child(2) { width: 63px; padding-right: 2px; }
.rec svg {
  width: 26px;
  height: 26px;
  margin: 0 auto 8px;
}
.rec.two svg { margin-bottom: 2px; }
.rec.off { color: #a8a8a6; padding-right: 2px; }
.rec.pressed {
  width: 41px;
  margin-left: 8px;
  border: 0;
  background: #c6c6c4;
}
.side {
  display: flex;
  flex-direction: column;
  justify-content: space-between;
  height: 75px;
  margin: -4px 0 0 8px;
}
.side svg {
  width: 10px;
  height: 10px;
}

/* taskbar */
.taskbar {
  position: absolute;
  left: 0;
  top: 684px;
  display: flex;
  width: 1150px;
  height: 36px;
}
.start {
  display: flex;
  align-items: center;
  justify-content: center;
  width: 42px;
  background: #22383e;
}
.start svg {
  width: 16px;
  height: 16px;
}
.search {
  box-sizing: border-box;
  display: flex;
  align-items: center;
  gap: 10px;
  width: 310px;
  padding-left: 11px;
  background: #f2f2ef;
  border: solid #c9c9c7;
  border-width: 1px 0;
  font-size: 14px;
  letter-spacing: -0.7px;
  word-spacing: 0.5px;
}
.search svg {
  width: 15px;
  height: 15px;
}
.apps {
  display: flex;
  width: 424px;
  background: #1d343c;
}
.apps i {
  display: flex;
  align-items: center;
  justify-content: center;
  box-sizing: border-box;
  width: 34.2px;
  border-bottom: 2px solid transparent;
}
.apps i svg {
  width: 22px;
  height: 22px;
}
.apps .taskview {
  width: 42px;
  margin-right: 3px;
}
.apps .taskview svg {
  width: 15px;
  height: 14px;
}
.apps .open {
  width: 28.2px;
  margin: 0 3px;
  border-color: #6a9bc9;
}
.apps .current {
  width: 32.2px;
  margin: 0 1px;
  background: #4a6071;
}
.updown {
  display: flex;
  flex-direction: column;
  align-items: center;
  justify-content: space-between;
  box-sizing: border-box;
  width: 16px;
  padding: 6px 0 5px;
  background: #f2f2ef;
}
.updown svg {
  width: 8px;
  height: 5px;
}
.tray {
  display: flex;
  flex: 1;
  align-items: center;
  padding-left: 54px;
  background: #1c2c44;
  color: #f4f6f8;
}
.tray svg {
  width: 15px;
  height: 14px;
  margin-right: 7px;
}
.tray .news {
  width: 22px;
  margin-right: 15px;
}
.tray .chev {
  width: 12px;
  height: 12px;
  margin-right: 6px;
}
.eng {
  width: 25px;
  margin-left: 2px;
  font-size: 11px;
  letter-spacing: -0.4px;
}
.clock {
  width: 67px;
  text-align: center;
  line-height: 16px;
  letter-spacing: -0.35px;
}
.tray .note {
  width: 16px;
  height: 16px;
  margin: 0 0 0 8px;
}
.peek {
  width: 1px;
  height: 36px;
  margin-left: auto;
  margin-right: 3px;
  background: #4a5870;
}
```
